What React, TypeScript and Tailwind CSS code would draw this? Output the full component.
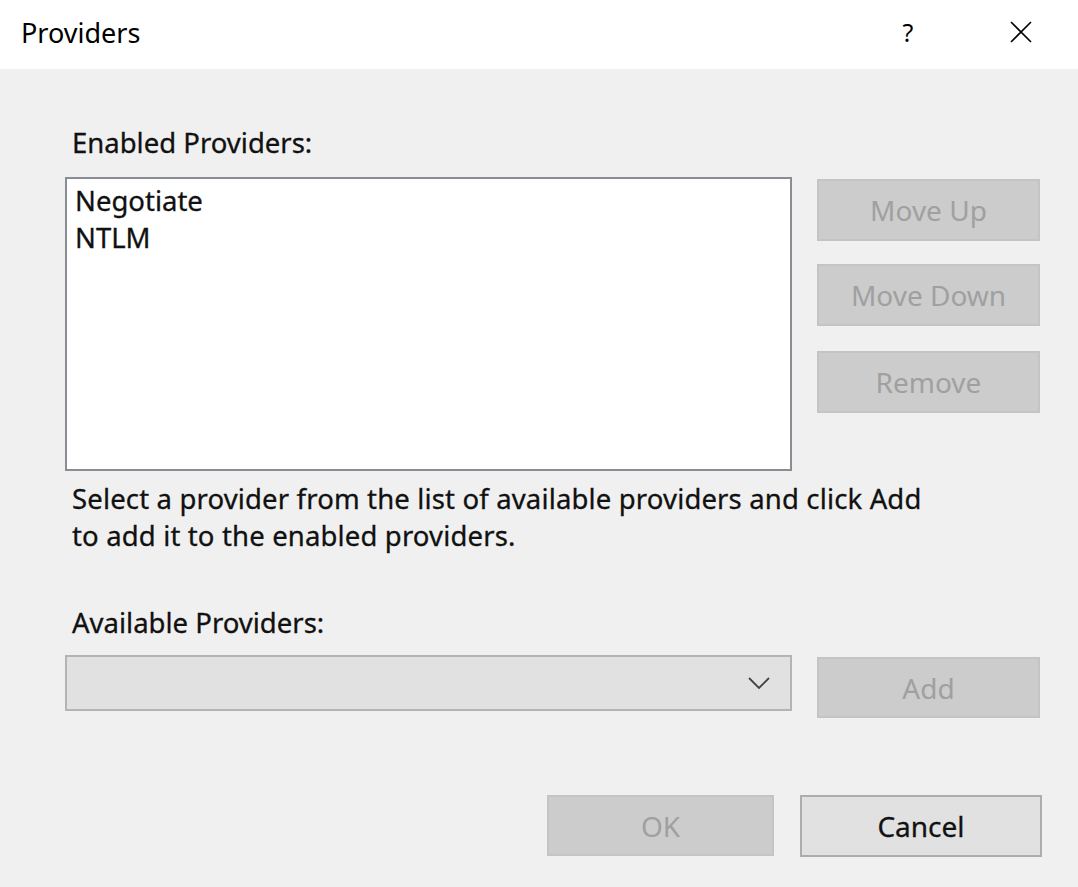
import React from "react";

const font = { fontFamily: '"Noto Sans", "Open Sans", sans-serif' };

function DisabledButton({ label, className }: { label: string; className?: string }) {
  return (
    <div
      className={
        "flex items-center justify-center bg-[#cccccc] border-2 border-[#c4c4c4] text-[#a0a0a0] text-[28px] leading-[32px] " +
        (className ?? "")
      }
    >
      {label}
    </div>
  );
}

export default function App() {
  return (
    <div className="w-[1078px] h-[887px] bg-[#f0f0f0] flex flex-col text-[#111]" style={font}>
      {/* Title bar */}
      <div className="h-[69px] bg-white flex items-center">
        <div className="pl-[21px] text-[27px] leading-[32px] pb-[4px] flex-1 text-black">Providers</div>
        <div className="w-[30px] text-[25px] leading-[32px] pb-[6px] text-center mr-[87px] text-black">?</div>
        <div className="mr-[46px] pb-[6px]">
          <svg width="22" height="22" viewBox="0 0 22 22">
            <path d="M1 1 L21 21 M21 1 L1 21" stroke="#000" strokeWidth="1.6" fill="none" />
          </svg>
        </div>
      </div>

      {/* Body */}
      <div className="flex flex-col pl-[65px] [-webkit-text-stroke:0.3px_#111]">
        <div className="mt-[58px] pl-[7px] text-[27.5px] leading-[32px] h-[32px]">Enabled Providers:</div>

        <div className="mt-[18px] flex">
          <div className="w-[727px] h-[294px] bg-white border-2 border-[#8a8d94] pl-[8px] pt-[3px] text-[27.5px] leading-[37px]">
            <div>Negotiate</div>
            <div>NTLM</div>
          </div>
          <div className="ml-[25px] flex flex-col pt-[2px] [-webkit-text-stroke:0]">
            <DisabledButton label="Move Up" className="w-[223px] h-[62px]" />
            <DisabledButton label="Move Down" className="w-[223px] h-[62px] mt-[23px]" />
            <DisabledButton label="Remove" className="w-[223px] h-[62px] mt-[25px]" />
          </div>
        </div>

        <div className="mt-[9px] pl-[7px] text-[27.5px] leading-[37px] tracking-[0.15px]">
          Select a provider from the list of available providers and click Add
          <br />
          to add it to the enabled providers.
        </div>

        <div className="mt-[53px] pl-[7px] text-[27.5px] leading-[32px] h-[32px]">Available Providers:</div>

        <div className="mt-[16px] flex items-start">
          <div className="w-[727px] h-[56px] bg-[#e1e1e1] border-2 border-[#b4b4b4] flex items-center justify-end pr-[20px]">
            <svg width="22" height="14" viewBox="0 0 22 14">
              <path d="M1 2 L11 12 L21 2" stroke="#444" strokeWidth="1.8" fill="none" />
            </svg>
          </div>
          <div className="[-webkit-text-stroke:0]">
            <DisabledButton label="Add" className="ml-[25px] mt-[2px] w-[223px] h-[61px]" />
          </div>
        </div>
      </div>

      <div className="mt-[77px] flex justify-end pr-[36px]">
        <DisabledButton label="OK" className="w-[227px] h-[61px]" />
        <div className="ml-[26px] w-[242px] h-[62px] bg-[#e1e1e1] border-2 border-[#adadad] flex items-center justify-center text-[28px] leading-[32px] [-webkit-text-stroke:0.3px_#111]">
          Cancel
        </div>
      </div>
    </div>
  );
}
